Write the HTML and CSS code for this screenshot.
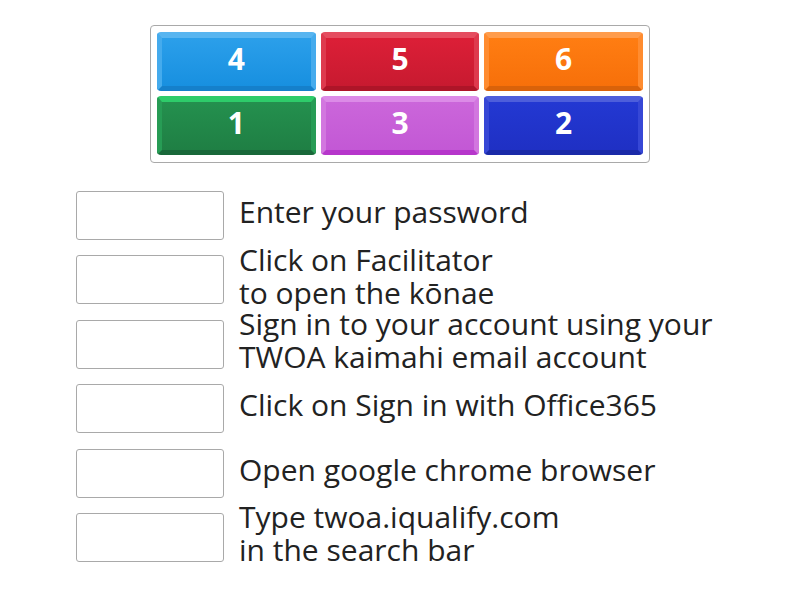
FILE: index.html
```html
<!DOCTYPE html>
<html>
<head>
<meta charset="utf-8">
<link rel="stylesheet" href="styles.css">
</head>
<body>
<div class="page">
  <div class="bank">
    <div class="tile blue">4</div>
    <div class="tile red">5</div>
    <div class="tile orange">6</div>
    <div class="tile green">1</div>
    <div class="tile purple">3</div>
    <div class="tile navy">2</div>
  </div>
  <div class="list">
    <div class="row"><div class="slot"></div><div class="label">Enter your password</div></div>
    <div class="row"><div class="slot"></div><div class="label">Click on Facilitator<br>to open the kōnae</div></div>
    <div class="row"><div class="slot"></div><div class="label">Sign in to your account using your<br>TWOA kaimahi email account</div></div>
    <div class="row"><div class="slot"></div><div class="label">Click on Sign in with Office365</div></div>
    <div class="row"><div class="slot"></div><div class="label">Open google chrome browser</div></div>
    <div class="row"><div class="slot"></div><div class="label">Type twoa.iqualify.com<br>in the search bar</div></div>
  </div>
</div>
</body>
</html>
```

FILE: styles.css
```css
* { box-sizing: border-box; }
html, body { margin: 0; padding: 0; background: #fff; }
body { font-family: "Open Sans", "DejaVu Sans", sans-serif; color: #222; }
.page { width: 800px; height: 600px; position: relative; overflow: hidden; }
.bank {
  margin: 25px 0 0 150px;
  width: 500px;
  height: 138px;
  border: 1px solid #a9a9a9;
  border-radius: 4px;
  padding: 6px;
  display: grid;
  grid-template-columns: repeat(3, 1fr);
  grid-template-rows: 59px 59px;
  column-gap: 5px;
  row-gap: 5px;
}
.tile {
  border-radius: 4px;
  border-style: solid;
  border-width: 6px 5px 5px 5px;
  color: #fff;
  font-weight: 700;
  font-size: 30px;
  display: flex;
  align-items: center;
  justify-content: center;
  line-height: 1;
  padding-bottom: 7px;
}
.blue { background: linear-gradient(#2b9fea, #1890e0); border-color: #58b5f0 #45abed #1580cb #45abed; }
.red { background: linear-gradient(#dc1f37, #c81a30); border-color: #e54d60 #de3a4e #ae1528 #de3a4e; }
.orange { background: linear-gradient(#ff7d12, #f7700a); border-color: #ff9c4c #ff8c30 #d9620a #ff8c30; }
.green { background: linear-gradient(#24904e, #1f7f44); border-color: #2ecc6a #279c55 #19683a #279c55; }
.purple { background: linear-gradient(#cb66da, #c358d5); border-color: #dc8be7 #d277df #b636cb #d277df; }
.navy { background: linear-gradient(#2338d2, #1f30c4); border-color: #4d5edb #3647d6 #1a2aa8 #3647d6; }
.list { margin: 20.3px 0 0 76px; }
.row {
  height: 64.4px;
  display: flex;
  align-items: center;
}
.slot {
  flex: none;
  width: 148px;
  height: 49px;
  border: 1px solid #a9a9a9;
  border-radius: 3px;
  background: #fff;
}
.label {
  margin-left: 15px;
  font-size: 30px;
  line-height: 33px;
  white-space: nowrap;
  color: #222;
  margin-top: -8px;
}
```
